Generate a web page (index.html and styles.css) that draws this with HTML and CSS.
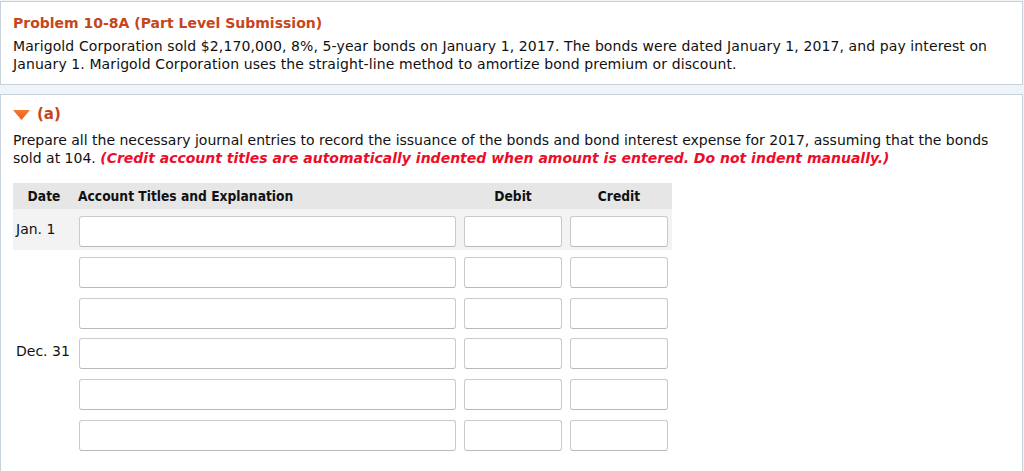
FILE: index.html
```html
<!DOCTYPE html>
<html lang="en">
<head>
<meta charset="utf-8">
<title>Problem 10-8A</title>
<link rel="stylesheet" href="styles.css">
</head>
<body>
<div class="panel intro">
  <h1 class="title">Problem 10-8A (Part Level Submission)</h1>
  <p class="text">Marigold Corporation sold $2,170,000, 8%, 5-year bonds on January 1, 2017. The bonds were dated January 1, 2017, and pay interest on January 1. Marigold Corporation uses the straight-line method to amortize bond premium or discount.</p>
</div>
<div class="panel part">
  <div class="part-head">
    <svg class="caret" width="17" height="10" viewBox="0 0 17 10" aria-hidden="true">
      <defs>
        <linearGradient id="cg" x1="0" y1="0" x2="0" y2="1">
          <stop offset="0" stop-color="#f47a32"/>
          <stop offset="1" stop-color="#ef5a16"/>
        </linearGradient>
      </defs>
      <polygon points="0,0 17,0 8.5,10" fill="url(#cg)"/>
    </svg>
    <span class="part-label">(a)</span>
  </div>
  <p class="text prompt">Prepare all the necessary journal entries to record the issuance of the bonds and bond interest expense for 2017, assuming that the bonds sold at 104. <em class="note">(Credit account titles are automatically indented when amount is entered. Do not indent manually.)</em></p>
  <table class="journal">
    <colgroup>
      <col class="c-date"><col class="c-acct"><col class="c-amt"><col class="c-amt">
    </colgroup>
    <thead>
      <tr>
        <th class="h-date">Date</th>
        <th class="h-acct">Account Titles and Explanation</th>
        <th class="h-amt">Debit</th>
        <th class="h-amt">Credit</th>
      </tr>
    </thead>
    <tbody>
      <tr class="shade">
        <td class="date">Jan. 1</td>
        <td><input class="field" type="text"></td>
        <td><input class="field" type="text"></td>
        <td><input class="field" type="text"></td>
      </tr>
      <tr>
        <td class="date"></td>
        <td><input class="field" type="text"></td>
        <td><input class="field" type="text"></td>
        <td><input class="field" type="text"></td>
      </tr>
      <tr>
        <td class="date"></td>
        <td><input class="field" type="text"></td>
        <td><input class="field" type="text"></td>
        <td><input class="field" type="text"></td>
      </tr>
      <tr>
        <td class="date">Dec. 31</td>
        <td><input class="field" type="text"></td>
        <td><input class="field" type="text"></td>
        <td><input class="field" type="text"></td>
      </tr>
      <tr>
        <td class="date"></td>
        <td><input class="field" type="text"></td>
        <td><input class="field" type="text"></td>
        <td><input class="field" type="text"></td>
      </tr>
      <tr>
        <td class="date"></td>
        <td><input class="field" type="text"></td>
        <td><input class="field" type="text"></td>
        <td><input class="field" type="text"></td>
      </tr>
    </tbody>
  </table>
</div>
</body>
</html>
```

FILE: styles.css
```css
html, body {
  margin: 0;
  padding: 0;
}
body {
  background: #eff4f9;
  padding-top: 1px;
  font-family: "DejaVu Sans", Verdana, sans-serif;
  color: #111;
  overflow: hidden;
}
.panel {
  background: #fff;
  border: 1px solid #c6d1dc;
  margin-right: 1px;
  padding: 12px 12px 11px 12px;
}
.intro {
  height: 59px;
  box-sizing: content-box;
}
.part {
  margin-top: 9px;
  padding-top: 10px;
  min-height: 420px;
}
.title {
  margin: 0;
  font-size: 14px;
  line-height: 18px;
  font-weight: bold;
  color: #c6461c;
}
.text {
  margin: 5px 0 0 0;
  font-size: 14px;
  line-height: 18px;
  letter-spacing: 0.1px;
}
.part-head {
  display: flex;
  align-items: center;
  height: 18px;
}
.caret {
  display: block;
  margin-top: 1px;
  margin-right: 7px;
}
.part-label {
  font-size: 15px;
  line-height: 18px;
  font-weight: bold;
  color: #c6461c;
}
.prompt {
  margin-top: 8px;
  letter-spacing: 0;
}
.note {
  font-weight: bold;
  font-style: italic;
  color: #ec0d2a;
}
.journal {
  margin-top: 16px;
  border-collapse: collapse;
  table-layout: fixed;
  width: 659px;
}
.c-date { width: 62px; }
.c-acct { width: 385px; }
.c-amt { width: 106px; }
.journal th {
  background: #e6e6e6;
  height: 26px;
  padding: 0;
  font-family: "DejaVu Sans Condensed", "DejaVu Sans", sans-serif;
  font-size: 13.7px;
  font-weight: bold;
  color: #111;
  vertical-align: middle;
}
.journal th.h-date, .journal th.h-amt { text-align: center; }
.journal th.h-acct { text-align: left; padding-left: 3px; }
.journal td {
  padding: 7px 4px 2.8px 4px;
  vertical-align: top;
}
.journal .shade td { background: #f3f3f3; }
.journal td.date {
  padding-left: 3px;
  padding-right: 0;
  font-family: "DejaVu Sans", Verdana, sans-serif;
  font-size: 14px;
  line-height: 26px;
  color: #111;
  white-space: nowrap;
}
.field {
  display: block;
  box-sizing: border-box;
  width: 100%;
  height: 31px;
  margin: 0;
  padding: 0 6px;
  background: #fff;
  border: 1px solid #cacaca;
  border-bottom-color: #b9b9b9;
  border-radius: 3px;
  font: 13px "DejaVu Sans", sans-serif;
  outline: none;
}
```
